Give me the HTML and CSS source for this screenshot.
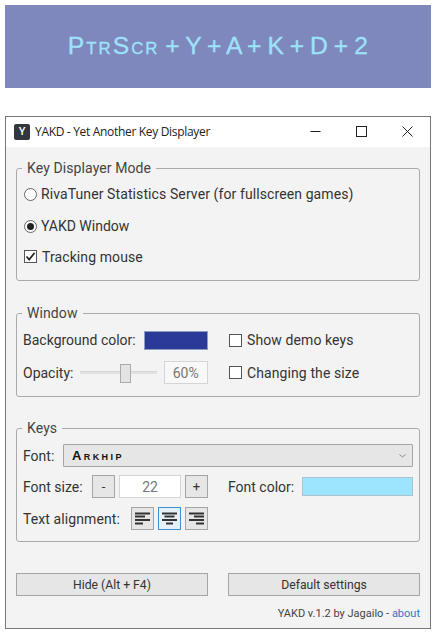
FILE: index.html
```html
<!DOCTYPE html>
<html lang="en">
<head>
<meta charset="utf-8">
<title>YAKD</title>
<link rel="stylesheet" href="styles.css">
</head>
<body>
<div class="banner"><span class="banner-text"><span class="caps">PtrScr</span> + Y + A + K + D + 2</span></div>
<div class="window">
  <header class="titlebar">
    <span class="app-icon">Y</span>
    <span class="title">YAKD - Yet Another Key Displayer</span>
    <span class="win-btn btn-min"><svg width="12" height="11" viewBox="0 0 12 11"><path d="M1.5 5.5H11.5" stroke="#222" fill="none"/></svg></span>
    <span class="win-btn btn-max"><svg width="11" height="11" viewBox="0 0 11 11"><rect x="0.5" y="0.5" width="10" height="10" stroke="#222" fill="none"/></svg></span>
    <span class="win-btn btn-close"><svg width="11" height="11" viewBox="0 0 11 11"><path d="M0.5 0.5L10.5 10.5M10.5 0.5L0.5 10.5" stroke="#222" fill="none"/></svg></span>
  </header>
  <main class="content">
    <fieldset class="group group-mode">
      <legend>Key Displayer Mode</legend>
      <div class="row"><span class="radio"></span><span class="wide-label">RivaTuner Statistics Server (for fullscreen games)</span></div>
      <div class="row"><span class="radio on"></span><span>YAKD Window</span></div>
      <div class="row row-short"><span class="check"><svg width="13" height="13" viewBox="0 0 13 13"><path d="M2.5 6.5L5.2 9.6L10.6 2.8" stroke="#222" stroke-width="1.7" fill="none"/></svg></span><span class="wide-label">Tracking mouse</span></div>
    </fieldset>

    <fieldset class="group group-window">
      <legend>Window</legend>
      <div class="row split">
        <div class="cell-left"><span>Background color:</span><span class="swatch swatch-bg"></span></div>
        <div class="cell-right"><span class="check"></span><span class="wide-label">Show demo keys</span></div>
      </div>
      <div class="row row-tall split">
        <div class="cell-left"><span>Opacity:</span>
          <span class="slider"><span class="thumb"></span></span>
          <span class="field field-op">60%</span></div>
        <div class="cell-right"><span class="check"></span><span class="wide-label">Changing the size</span></div>
      </div>
    </fieldset>

    <fieldset class="group group-keys">
      <legend>Keys</legend>
      <div class="row row-tall">
        <span class="lbl-font">Font:</span>
        <span class="select"><span class="select-text">Arkhip</span>
          <svg width="7" height="4" viewBox="0 0 7 4"><path d="M0.5 0.5L3.5 3L6.5 0.5" stroke="#888" fill="none"/></svg></span>
      </div>
      <div class="row row-tall split">
        <div class="cell-left"><span>Font size:</span>
          <span class="spin">
            <span class="btn-sq">-</span><span class="field field-size">22</span><span class="btn-sq">+</span>
          </span></div>
        <div class="cell-right cell-color"><span>Font color:</span><span class="swatch swatch-fg"></span></div>
      </div>
      <div class="row row-tall row-last">
        <span class="lbl-align wide-label">Text alignment:</span>
        <span class="aligns">
          <span class="btn-sq"><svg width="15" height="13" viewBox="0 0 15 13"><path d="M0 1.5H15M0 4.5H10M0 8H15M0 11.5H8" stroke="#333" stroke-width="1.9" fill="none"/></svg></span>
          <span class="btn-sq active"><svg width="15" height="13" viewBox="0 0 15 13"><path d="M0 1.5H15M2.5 4.5H12.5M0 8H15M4 11.5H11" stroke="#333" stroke-width="1.9" fill="none"/></svg></span>
          <span class="btn-sq"><svg width="15" height="13" viewBox="0 0 15 13"><path d="M0 1.5H15M5 4.5H15M0 8H15M7 11.5H15" stroke="#333" stroke-width="1.9" fill="none"/></svg></span>
        </span>
      </div>
    </fieldset>

    <div class="actions">
      <span class="action">Hide (Alt + F4)</span>
      <span class="action">Default settings</span>
    </div>
    <footer class="footer">YAKD v.1.2 by Jagailo - <span class="link">about</span></footer>
  </main>
</div>
</body>
</html>
```
FILE: styles.css
```css
* { box-sizing: border-box; }
html, body { margin: 0; padding: 0; }
body {
  width: 436px;
  height: 634px;
  padding: 5px;
  background: #fff;
  font-family: Roboto, "Liberation Sans", sans-serif;
  font-size: 14px;
  color: #333;
  overflow: hidden;
}
.banner {
  height: 83px;
  background: #7f88bd;
  display: flex;
  align-items: center;
  justify-content: center;
}
.banner-text {
  display: inline-block;
  font-family: "Liberation Sans", sans-serif;
  font-size: 23.5px;
  color: #9de2fa;
  white-space: nowrap;
  transform: scaleX(1.05);
  word-spacing: -0.9px;
  -webkit-text-stroke: 0.3px #9de2fa;
}
.caps { font-variant: small-caps; letter-spacing: 1.9px; }
.window {
  margin-top: 28px;
  height: 513px;
  border: 1px solid #777;
  background: #f3f3f3;
  display: flex;
  flex-direction: column;
}
.titlebar {
  height: 30px;
  flex: none;
  background: #fff;
  display: flex;
  align-items: center;
  padding: 0 0 1px 8px;
  color: #222;
}
.app-icon {
  width: 16px;
  height: 16px;
  background: #32373d;
  border-radius: 2px;
  color: #fff;
  font-size: 11px;
  font-weight: 500;
  display: flex;
  align-items: center;
  justify-content: center;
}
.title {
  margin-left: 5px;
  flex: 1;
  font-family: "Open Sans", sans-serif;
  font-size: 12px;
  letter-spacing: -0.32px;
  white-space: nowrap;
}
.win-btn { display: flex; align-items: center; justify-content: center; width: 46px; }
.content {
  flex: 1;
  display: flex;
  flex-direction: column;
  padding: 13px 10px 0;
}
.group {
  margin: 0;
  border: 1px solid #aaa;
  border-radius: 3px;
  padding: 0 6px;
  display: flex;
  flex-direction: column;
}
.group legend {
  margin-left: -1px;
  padding: 0 5px;
  line-height: 16px;
  height: 16px;
  color: #444;
  letter-spacing: 0.1px;
}
.group-mode { gap: 12px; padding-top: 8px; padding-bottom: 14px; }
.group-window { gap: 11px; padding-top: 9px; padding-bottom: 12px; margin-top: 24px; }
.group-keys { gap: 8px; padding-top: 8px; padding-bottom: 11px; margin-top: 23px; }
.row { display: flex; align-items: center; height: 20px; white-space: nowrap; }
.row-short { height: 19px; margin-top: -1px; }
.row-tall { height: 23px; }
.row-last { margin-top: 1px; }
.wide-label { letter-spacing: 0.1px; }
.cell-left { width: 185px; display: flex; align-items: center; justify-content: space-between; }
.cell-right { margin-left: 20px; display: flex; align-items: center; flex: 1; }
.radio {
  width: 13px;
  height: 13px;
  margin: 0 4px 0 1px;
  border-radius: 50%;
  border: 1px solid #666;
  background: #fff;
  display: flex;
  align-items: center;
  justify-content: center;
  flex: none;
}
.radio.on::after {
  content: "";
  width: 7px;
  height: 7px;
  border-radius: 50%;
  background: #222;
}
.check {
  width: 13px;
  height: 13px;
  margin: 0 5px 0 1px;
  border: 1px solid #555;
  background: #fff;
  flex: none;
  display: flex;
}
.check svg { margin: -1px; }
.swatch { display: block; height: 19px; border: 1px solid #8d9cc2; }
.swatch-bg { width: 64px; background: #2a3a96; }
.swatch-fg { width: 111px; background: #9de4ff; border-color: #aac4cf; margin-left: auto; }
.slider {
  width: 77px;
  height: 3px;
  background: #e2e2e2;
  border-top: 1px solid #d8d8d8;
  display: flex;
  align-items: center;
  justify-content: center;
  margin-left: 7px;
}
.thumb {
  display: block;
  width: 11px;
  height: 19px;
  background: #e3e3e3;
  border: 1px solid #aaa;
  margin-left: 14px;
  flex: none;
}
.field {
  display: flex;
  align-items: center;
  justify-content: center;
  height: 23px;
  background: #fff;
  border: 1px solid #d5d5d5;
  color: #777;
}
.field-op { width: 45px; margin-left: 7px; background: #f8f8f8; }
.spin { display: flex; gap: 4px; }
.field-size { width: 62px; font-size: 14px; }
.btn-sq {
  display: flex;
  align-items: center;
  justify-content: center;
  width: 23px;
  height: 23px;
  background: #e6e6e6;
  border: 1px solid #a5a5a5;
  font-size: 13px;
  color: #333;
}
.btn-sq.active { background: #e5f0f9; border-color: #3f8fd0; }
.lbl-font { width: 40px; flex: none; }
.select {
  flex: 1;
  height: 23px;
  display: flex;
  align-items: center;
  justify-content: space-between;
  padding: 0 6px 0 8px;
  background: #e6e6e6;
  border: 1px solid #a5a5a5;
  border-radius: 1px;
}
.select-text {
  font-family: "Liberation Sans", sans-serif;
  font-weight: 700;
  font-size: 13px;
  font-variant: small-caps;
  letter-spacing: 2.4px;
  color: #111;
}
.cell-color { justify-content: space-between; }
.lbl-align { width: 108px; flex: none; }
.aligns { display: flex; gap: 4px; }
.actions { display: flex; justify-content: space-between; margin-top: 31px; }
.action {
  width: 192px;
  height: 23px;
  display: flex;
  align-items: center;
  justify-content: center;
  background: #e6e6e6;
  border: 1px solid #a5a5a5;
  font-size: 12.2px;
}
.footer {
  margin-top: 10px;
  text-align: right;
  font-size: 11px;
  line-height: 16px;
  color: #444;
}
.link { color: #3a73c4; }
```
